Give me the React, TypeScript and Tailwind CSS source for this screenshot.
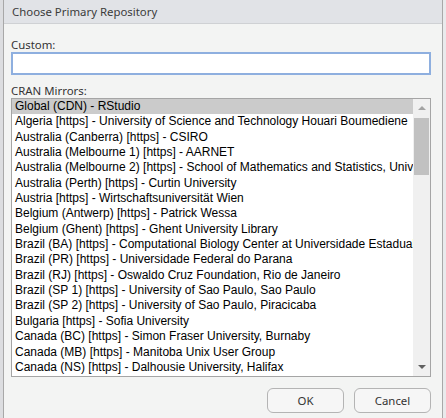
import React from "react";

const items = [
  "Global (CDN) - RStudio",
  "Algeria [https] - University of Science and Technology Houari Boumediene",
  "Australia (Canberra) [https] - CSIRO",
  "Australia (Melbourne 1) [https] - AARNET",
  "Australia (Melbourne 2) [https] - School of Mathematics and Statistics, University of Melbourne",
  "Australia (Perth) [https] - Curtin University",
  "Austria [https] - Wirtschaftsuniversität Wien",
  "Belgium (Antwerp) [https] - Patrick Wessa",
  "Belgium (Ghent) [https] - Ghent University Library",
  "Brazil (BA) [https] - Computational Biology Center at Universidade Estadual de Santa Cruz",
  "Brazil (PR) [https] - Universidade Federal do Parana",
  "Brazil (RJ) [https] - Oswaldo Cruz Foundation, Rio de Janeiro",
  "Brazil (SP 1) [https] - University of Sao Paulo, Sao Paulo",
  "Brazil (SP 2) [https] - University of Sao Paulo, Piracicaba",
  "Bulgaria [https] - Sofia University",
  "Canada (BC) [https] - Simon Fraser University, Burnaby",
  "Canada (MB) [https] - Manitoba Unix User Group",
  "Canada (NS) [https] - Dalhousie University, Halifax",
  "Canada (ON 1) [https] - Manitoba Unix User Group",
];

export default function App() {
  return (
    <div className="flex w-[446px] h-[418px] bg-[#e9eaec] overflow-hidden">
      <div className="w-[3px] shrink-0 bg-[#dcdde0]" />
      <div
        className="flex flex-col w-[440px] shrink-0 h-full border-l border-r border-[#a8a8a8] bg-[#f3f4f3] text-[#333]"
        style={{ fontFamily: '"Noto Sans", "Open Sans", sans-serif' }}
      >
        <div className="h-[24px] shrink-0 flex items-center pl-[8px] bg-[#e1e3e7] border-b border-[#cfd1d4] text-[11.4px] text-[#3b3b3b]">
          Choose Primary Repository
        </div>
        <div className="flex flex-col pl-[7px]">
          <div className="mt-[13px] text-[11.4px] leading-[15px] text-[#333]">Custom:</div>
          <div className="w-[420px] h-[23px] border-2 border-[#8eafdf] bg-white" />
          <div className="mt-[8px] text-[11.4px] leading-[15px] text-[#333]">CRAN Mirrors:</div>
          <div
            className="w-[420px] h-[279px] border border-[#a5a5a5] bg-white flex overflow-hidden"
            style={{ fontFamily: '"Liberation Sans", Arial, sans-serif' }}
          >
            <div className="flex-1 overflow-hidden flex flex-col">
              {items.map((t, i) => (
                <div
                  key={i}
                  className={
                    "h-[15.35px] shrink-0 pl-[3px] text-[12px] leading-[15.35px] whitespace-nowrap text-black " +
                    (i === 0 ? "bg-[#cbcbcb]" : "")
                  }
                >
                  {t}
                </div>
              ))}
            </div>
            <div className="w-[17px] shrink-0 bg-[#f0f0f0] flex flex-col">
              <div className="h-[17px] flex items-center justify-center">
                <svg width="8" height="5" viewBox="0 0 8 5">
                  <path d="M0 5 L4 1 L8 5 Z" fill="#a3a3a3" />
                </svg>
              </div>
              <div className="mx-[1px] mt-[2px] h-[57px] bg-[#c1c1c1]" />
              <div className="flex-1" />
              <div className="h-[17px] flex items-center justify-center">
                <svg width="8" height="5" viewBox="0 0 8 5">
                  <path d="M0 0 L4 4 L8 0 Z" fill="#606060" />
                </svg>
              </div>
            </div>
          </div>
          <div className="mt-[11px] w-[420px] flex justify-end gap-[10px]">
            <button className="w-[77px] h-[25px] rounded-[6px] border border-[#b4b4b4] bg-[#f6f6f6] text-[11.4px] leading-[23px] text-[#333]">
              OK
            </button>
            <button className="w-[77px] h-[25px] rounded-[6px] border border-[#b4b4b4] bg-[#f6f6f6] text-[11.4px] leading-[23px] text-[#333]">
              Cancel
            </button>
          </div>
        </div>
      </div>
    </div>
  );
}
